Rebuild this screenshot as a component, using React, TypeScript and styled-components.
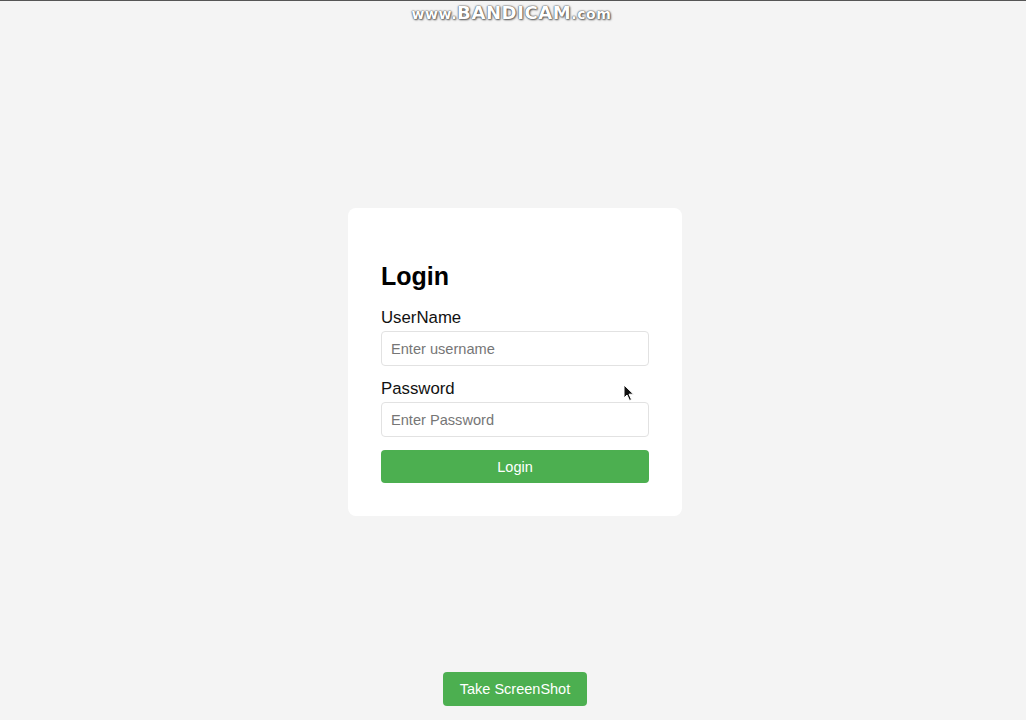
import React, { useState } from 'react'
import styled, { createGlobalStyle } from 'styled-components'

const GlobalStyle = createGlobalStyle`
    html, body {
        margin: 0;
        padding: 0;
        background: #f4f4f4;
        font-family: "Liberation Sans", Arial, sans-serif;
    }
`

export default function App() {
    const [username, set_username] = useState('');
    const [password, set_password] = useState('');

    function handle_submit(event) {
        event.preventDefault();
    }

    return (
        <>
            <GlobalStyle />
            <Page>
                <TopLine />
                <Watermark>
                    <Small>www.</Small>BANDICAM<Small>.com</Small>
                </Watermark>
                <Card>
                    <Title>Login</Title>
                    <Form onSubmit={handle_submit}>
                        <Label>UserName</Label>
                        <Styled_Input onChange={e => { set_username(e.target.value) }} value={username} placeholder='Enter username' />
                        <Label>Password</Label>
                        <Styled_Input onChange={e => { set_password(e.target.value) }} value={password} placeholder='Enter Password' type='password' $last />
                        <Login_Button type="submit">Login</Login_Button>
                    </Form>
                </Card>
                <Screenshot_Button>Take ScreenShot</Screenshot_Button>
                <Cursor width="12" height="18" viewBox="0 0 12 18">
                    <path d="M1 1 L1 14 L4 11 L6.5 16.5 L8.5 15.6 L6 10.2 L10.5 10.2 Z" fill="#111" stroke="#fff" strokeWidth="1" />
                </Cursor>
            </Page>
        </>
    )
}

const Page = styled.div`
    position: relative;
    height: 720px;
    box-sizing: border-box;
    display: flex;
    flex-direction: column;
    align-items: center;
    padding: 0 0 14px 4px;
    overflow: hidden;
`

const TopLine = styled.div`
    align-self: stretch;
    margin-left: -4px;
    height: 1px;
    background: #555555;
`

const Watermark = styled.div`
    position: absolute;
    top: 2px;
    left: 0;
    right: 0;
    text-align: center;
    margin-left: -3px;
    font-family: "DejaVu Sans", sans-serif;
    font-weight: bold;
    font-size: 18px;
    letter-spacing: 0.6px;
    color: #ffffff;
    text-shadow: 0 0 1px #444, 0 0 2px #555, 1px 1px 2px #666;
`

const Small = styled.span`
    font-size: 14px;
`

const Card = styled.div`
    margin-top: 207px;
    width: 334px;
    box-sizing: border-box;
    padding: 32px 33px 33px 33px;
    background: #ffffff;
    border-radius: 8px;
`

const Title = styled.h2`
    margin: 21px 0 17px 0;
    font-size: 25px;
    line-height: 30px;
    font-weight: bold;
    color: #000000;
`

const Form = styled.form`
    display: flex;
    flex-direction: column;
`

const Label = styled.label`
    font-size: 16.8px;
    line-height: 20px;
    color: #111111;
    margin-bottom: 3px;
`

const Styled_Input = styled.input<{ $last?: boolean }>`
    height: 35px;
    box-sizing: border-box;
    border: 1px solid #e2e2e2;
    border-radius: 4px;
    padding: 0 9px;
    margin-bottom: ${p => (p.$last ? '13px' : '13px')};
    font-family: "Liberation Sans", Arial, sans-serif;
    font-size: 14.6px;
    color: #222222;
    outline: none;
    background: #ffffff;

    &::placeholder {
        color: #767676;
    }
`

const Login_Button = styled.button`
    height: 33px;
    border: none;
    border-radius: 4px;
    background: #4caf50;
    color: #ffffff;
    font-family: "Liberation Sans", Arial, sans-serif;
    font-size: 14.5px;
    cursor: pointer;
`

const Screenshot_Button = styled.button`
    margin-top: auto;
    width: 144px;
    height: 34px;
    border: none;
    border-radius: 4px;
    background: #4caf50;
    color: #ffffff;
    font-family: "Liberation Sans", Arial, sans-serif;
    font-size: 14.5px;
    cursor: pointer;
`

const Cursor = styled.svg`
    position: absolute;
    left: 623px;
    top: 384px;
`
